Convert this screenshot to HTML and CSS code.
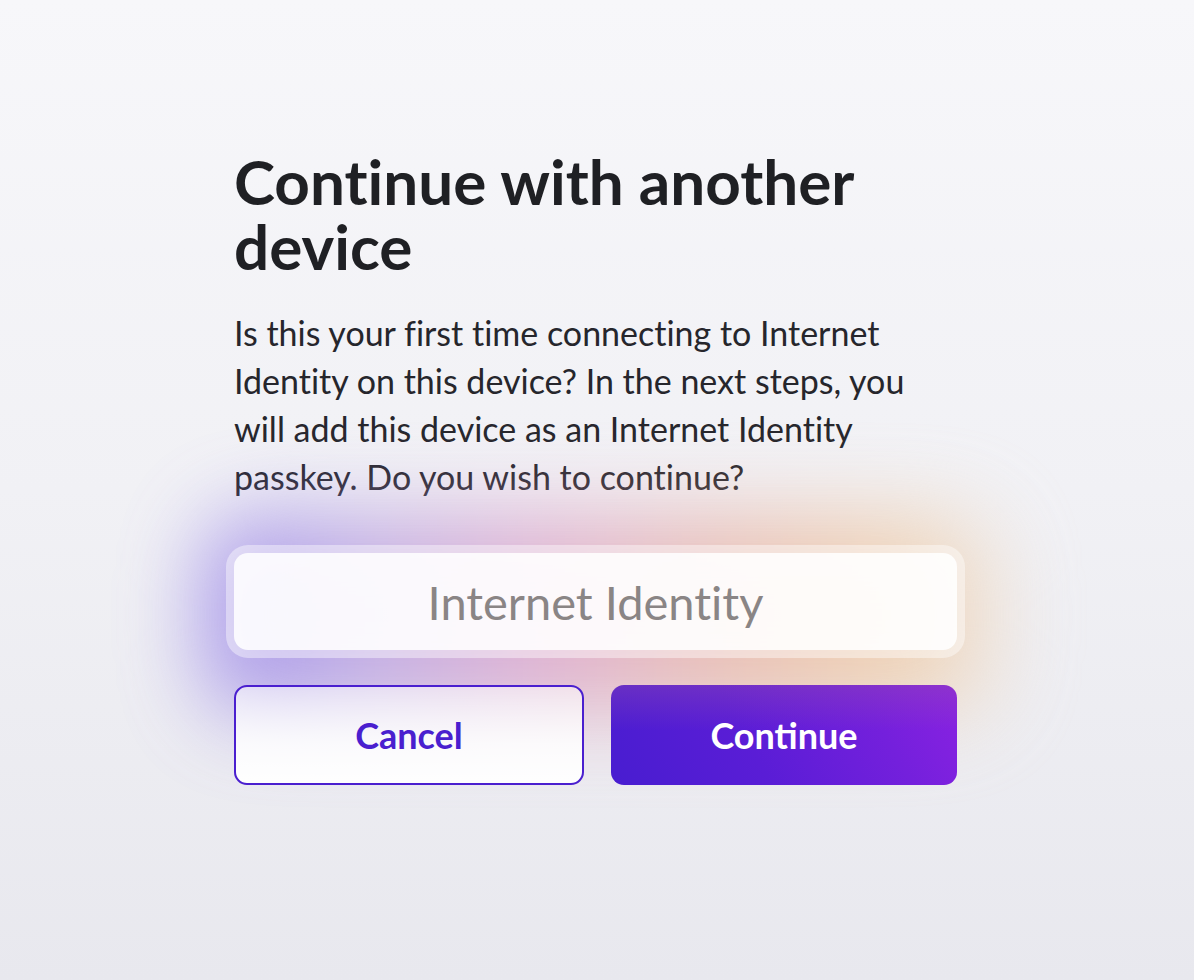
FILE: index.html
```html
<!DOCTYPE html>
<html lang="en">
<head>
<meta charset="utf-8">
<title>Continue with another device</title>
<link rel="stylesheet" href="styles.css">
</head>
<body>
<main class="page">
  <section class="panel">
    <h1 class="title">Continue with another device</h1>
    <p class="lead">Is this your first time connecting to Internet Identity on this device? In the next steps, you will add this device as an Internet Identity passkey. Do you wish to continue?</p>
    <div class="field-area">
      <div class="glow"></div>
      <div class="field-ring">
        <div class="field">Internet Identity</div>
      </div>
      <div class="actions">
        <button class="btn btn-cancel">Cancel</button>
        <button class="btn btn-continue">Continue</button>
      </div>
    </div>
  </section>
</main>
</body>
</html>
```
FILE: styles.css
```css
html, body {
  margin: 0;
  padding: 0;
}
*, *::before, *::after {
  box-sizing: border-box;
}
body {
  min-height: 980px;
  background: linear-gradient(180deg, #f7f7fa 0%, #f1f1f5 50%, #e8e8ee 100%);
  font-family: Lato, "Liberation Sans", sans-serif;
  font-variant-ligatures: none;
  overflow: hidden;
}
.page {
  display: flex;
  justify-content: flex-start;
  padding: 149px 0 0 234px;
}
.panel {
  width: 723px;
  display: flex;
  flex-direction: column;
}
.title {
  margin: 0;
  font-size: 62px;
  line-height: 65px;
  font-weight: 700;
  color: #1f2024;
}
.lead {
  margin: 30px 0 0 0;
  font-size: 34px;
  line-height: 48px;
  font-weight: 400;
  color: #26262c;
  width: 690px;
}
.field-area {
  position: relative;
  margin-top: 44px;
  display: flex;
  flex-direction: column;
}
.glow {
  position: absolute;
  left: -30px;
  top: -30px;
  width: 790px;
  height: 200px;
  background: linear-gradient(90deg, #8670e8 0%, #ad95e2 18%, #d99ac6 42%, #e8ae9e 66%, #efc69c 86%, #efdcc6 100%);
  filter: blur(42px);
  opacity: 0.72;
  border-radius: 50px;
  z-index: 0;
}
.field-ring {
  position: relative;
  z-index: 1;
  margin: 0 -8px;
  padding: 8px;
  border-radius: 22px;
  background: rgba(255, 255, 255, 0.42);
}
.field {
  height: 97px;
  border-radius: 14px;
  background: rgba(255, 255, 255, 0.86);
  display: flex;
  align-items: center;
  justify-content: center;
  font-size: 47px;
  color: #8a8585;
  font-weight: 400;
}
.actions {
  position: relative;
  z-index: 1;
  margin-top: 27px;
  display: flex;
  gap: 27px;
}
.btn {
  flex: 1 1 0;
  height: 100px;
  border-radius: 13px;
  font-family: Lato, "Liberation Sans", sans-serif;
  font-size: 36px;
  font-weight: 700;
  cursor: pointer;
  padding: 0;
}
.btn-cancel {
  background: linear-gradient(180deg, rgba(255,255,255,0.5) 0%, rgba(255,255,255,0.85) 60%, rgba(255,255,255,0.96) 100%);
  border: 2px solid #4a1fcf;
  color: #4a1fcf;
}
.btn-continue {
  border: none;
  color: #ffffff;
  background:
    linear-gradient(180deg, rgba(150, 80, 170, 0.35) 0%, rgba(150, 80, 170, 0) 45%),
    linear-gradient(60deg, #481dd0 0%, #5a1dd6 40%, #7420dc 75%, #8a22e2 100%);
}
```
